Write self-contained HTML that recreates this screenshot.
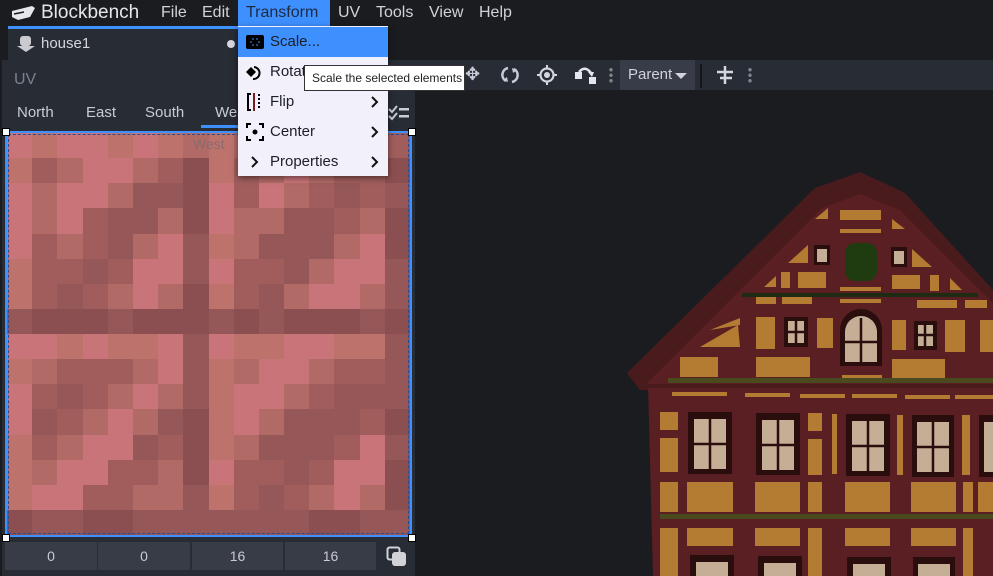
<!DOCTYPE html>
<html><head><meta charset="utf-8"><style>
*{margin:0;padding:0;box-sizing:border-box}
body{width:993px;height:576px;overflow:hidden;background:#1b1c20;font-family:"Liberation Sans","DejaVu Sans",sans-serif;position:relative;color:#d4d6dc}
.abs{position:absolute}
.menu span{position:absolute;top:4px;font-size:16px;color:#d0d3da}
#tex{position:absolute;left:7px;top:133px;width:403px;height:402px;display:grid;grid-template-columns:repeat(16,1fr);grid-template-rows:repeat(16,1fr)}
#tex i{display:block}
.P{background:#c97479}.R{background:#bd736b}.L{background:#b16a65}.M{background:#a05d5c}.N{background:#955757}.D{background:#8b4f51}
.mi{position:absolute;left:0;width:150px;height:30px;font-size:15px;color:#1d1f26}
.mi b{position:absolute;left:32px;top:6px;font-weight:normal}
.mi .ar{position:absolute;right:9px;top:9px}
.inp{position:absolute;top:542px;height:28px;background:#383c47;color:#c8cbd2;font-size:14px;text-align:center;line-height:28px}
.tb{position:absolute;top:104px;font-size:15px;color:#c8ccd4}
</style></head><body>
<div class="abs" style="left:0;top:0;width:993px;height:27px;background:#1b1c20"></div>
<svg class="abs" style="left:10px;top:5px" width="26" height="18" viewBox="0 0 26 18"><path d="M2 6 L22 1 L25 3 L20 12 L8 15 L2 12Z" fill="#e6e7ea"/><path d="M4 9 L14 7" stroke="#1b1c20" stroke-width="1.5"/></svg>
<div class="abs" style="left:41px;top:2px;font-size:19px;color:#e4e6ea">Blockbench</div>
<div class="menu">
<span style="left:161px">File</span><span style="left:202px">Edit</span>
</div>
<div class="abs" style="left:238px;top:0;width:92px;height:27px;background:#3e90ff"></div>
<div class="menu"><span style="left:246px;color:#1d2a44">Transform</span><span style="left:338px">UV</span><span style="left:376px">Tools</span><span style="left:429px">View</span><span style="left:479px">Help</span></div>
<div class="abs" style="left:0;top:27px;width:8px;height:33px;background:#1b1c20"></div>
<div class="abs" style="left:8px;top:26px;width:232px;height:3px;background:#3e90ff"></div>
<div class="abs" style="left:8px;top:29px;width:232px;height:31px;background:#282c34"></div>
<svg class="abs" style="left:16px;top:35px" width="20" height="18" viewBox="0 0 20 18"><rect x="4" y="1" width="11" height="10" rx="3" fill="#c9cbd1"/><path d="M1 11 H19 L10 17Z" fill="#c9cbd1"/></svg>
<div class="abs" style="left:41px;top:35px;font-size:15px;color:#d4d6dc">house1</div>
<div class="abs" style="left:227px;top:40px;width:8px;height:8px;border-radius:50%;background:#d4d6dc"></div>
<div class="abs" style="left:2px;top:60px;width:413px;height:516px;background:#282c34"></div>
<div class="abs" style="left:14px;top:71px;font-size:16px;color:#7c808a">UV</div>
<div class="tb" style="left:17px">North</div><div class="tb" style="left:86px">East</div><div class="tb" style="left:145px">South</div><div class="tb" style="left:215px">West</div>
<div class="abs" style="left:201px;top:125px;width:40px;height:3px;background:#3e90ff"></div>
<svg class="abs" style="left:388px;top:104px" width="22" height="18" viewBox="0 0 22 18"><path d="M1 5 L4 8 L9 2 M1 12 L4 15 L9 9" stroke="#c8ccd4" stroke-width="2" fill="none"/><rect x="11" y="4" width="10" height="2.5" fill="#c8ccd4"/><rect x="11" y="11" width="10" height="2.5" fill="#c8ccd4"/></svg>
<div class="abs" style="left:5px;top:131px;width:407px;height:406px;border:2px solid #3e90ff"></div>
<div id="tex">
<i class=P></i><i class=R></i><i class=P></i><i class=P></i><i class=R></i><i class=P></i><i class=R></i><i class=L></i><i class=R></i><i class=L></i><i class=P></i><i class=L></i><i class=M></i><i class=L></i><i class=L></i><i class=M></i>
<i class=R></i><i class=M></i><i class=L></i><i class=P></i><i class=P></i><i class=L></i><i class=M></i><i class=D></i><i class=R></i><i class=M></i><i class=L></i><i class=P></i><i class=L></i><i class=M></i><i class=M></i><i class=D></i>
<i class=P></i><i class=L></i><i class=P></i><i class=P></i><i class=L></i><i class=N></i><i class=N></i><i class=D></i><i class=P></i><i class=M></i><i class=P></i><i class=L></i><i class=M></i><i class=N></i><i class=M></i><i class=N></i>
<i class=P></i><i class=L></i><i class=P></i><i class=M></i><i class=N></i><i class=N></i><i class=L></i><i class=D></i><i class=P></i><i class=L></i><i class=L></i><i class=N></i><i class=N></i><i class=M></i><i class=L></i><i class=D></i>
<i class=P></i><i class=M></i><i class=L></i><i class=M></i><i class=N></i><i class=L></i><i class=P></i><i class=N></i><i class=R></i><i class=L></i><i class=N></i><i class=N></i><i class=N></i><i class=L></i><i class=P></i><i class=D></i>
<i class=R></i><i class=M></i><i class=M></i><i class=N></i><i class=M></i><i class=P></i><i class=P></i><i class=N></i><i class=P></i><i class=M></i><i class=M></i><i class=N></i><i class=L></i><i class=P></i><i class=P></i><i class=N></i>
<i class=R></i><i class=M></i><i class=N></i><i class=M></i><i class=L></i><i class=P></i><i class=L></i><i class=D></i><i class=R></i><i class=M></i><i class=N></i><i class=L></i><i class=P></i><i class=P></i><i class=L></i><i class=N></i>
<i class=N></i><i class=D></i><i class=D></i><i class=D></i><i class=N></i><i class=D></i><i class=D></i><i class=D></i><i class=N></i><i class=D></i><i class=N></i><i class=D></i><i class=D></i><i class=D></i><i class=N></i><i class=D></i>
<i class=P></i><i class=P></i><i class=R></i><i class=P></i><i class=R></i><i class=R></i><i class=P></i><i class=N></i><i class=P></i><i class=R></i><i class=R></i><i class=P></i><i class=P></i><i class=R></i><i class=R></i><i class=N></i>
<i class=R></i><i class=L></i><i class=M></i><i class=M></i><i class=M></i><i class=L></i><i class=P></i><i class=N></i><i class=R></i><i class=L></i><i class=P></i><i class=P></i><i class=L></i><i class=M></i><i class=M></i><i class=N></i>
<i class=P></i><i class=M></i><i class=N></i><i class=M></i><i class=L></i><i class=P></i><i class=L></i><i class=N></i><i class=R></i><i class=P></i><i class=P></i><i class=L></i><i class=M></i><i class=N></i><i class=N></i><i class=N></i>
<i class=P></i><i class=N></i><i class=M></i><i class=L></i><i class=P></i><i class=L></i><i class=N></i><i class=D></i><i class=R></i><i class=P></i><i class=L></i><i class=N></i><i class=N></i><i class=N></i><i class=M></i><i class=D></i>
<i class=R></i><i class=M></i><i class=L></i><i class=P></i><i class=P></i><i class=N></i><i class=M></i><i class=D></i><i class=R></i><i class=L></i><i class=N></i><i class=N></i><i class=N></i><i class=M></i><i class=P></i><i class=N></i>
<i class=R></i><i class=L></i><i class=P></i><i class=P></i><i class=M></i><i class=M></i><i class=L></i><i class=D></i><i class=P></i><i class=M></i><i class=M></i><i class=N></i><i class=M></i><i class=P></i><i class=P></i><i class=D></i>
<i class=R></i><i class=P></i><i class=P></i><i class=M></i><i class=M></i><i class=L></i><i class=L></i><i class=N></i><i class=R></i><i class=M></i><i class=N></i><i class=M></i><i class=L></i><i class=P></i><i class=L></i><i class=D></i>
<i class=D></i><i class=N></i><i class=N></i><i class=D></i><i class=D></i><i class=N></i><i class=N></i><i class=N></i><i class=N></i><i class=N></i><i class=N></i><i class=N></i><i class=D></i><i class=D></i><i class=N></i><i class=N></i>
</div>
<div class="abs" style="left:8px;top:134px;width:401px;height:400px;border:1px dashed #2f4c8a"></div>
<div class="abs" style="left:193px;top:136px;font-size:14px;color:#8a6a6e">West</div>
<div class="abs" style="left:2px;top:128px;width:8px;height:8px;background:#fff;border:1px solid #000"></div>
<div class="abs" style="left:408px;top:128px;width:8px;height:8px;background:#fff;border:1px solid #000"></div>
<div class="abs" style="left:2px;top:534px;width:8px;height:8px;background:#fff;border:1px solid #000"></div>
<div class="abs" style="left:408px;top:534px;width:8px;height:8px;background:#fff;border:1px solid #000"></div>
<div class="inp" style="left:5px;width:92px">0</div>
<div class="inp" style="left:98px;width:92px">0</div>
<div class="inp" style="left:192px;width:91px">16</div>
<div class="inp" style="left:285px;width:91px">16</div>
<svg class="abs" style="left:386px;top:546px" width="21" height="21" viewBox="0 0 21 21"><rect x="1.5" y="1.5" width="12" height="12" rx="2" fill="none" stroke="#d0d2d8" stroke-width="2"/><rect x="6" y="6" width="14" height="14" rx="3" fill="#d0d2d8"/></svg>
<div class="abs" style="left:415px;top:60px;width:578px;height:30px;background:#282c35"></div>
<div class="abs" style="left:465px;top:64px;font-size:18px;color:#c8ccd8">✥</div>
<svg class="abs" style="left:500px;top:65px" width="20" height="20" viewBox="0 0 20 20"><path d="M8 3 A7 7 0 0 0 6 16 M12 17 A7 7 0 0 0 14 4" stroke="#c8ccd8" stroke-width="2.5" fill="none"/><path d="M3 15 L8 17 L7 12Z M17 5 L12 3 L13 8Z" fill="#c8ccd8"/></svg>
<svg class="abs" style="left:537px;top:65px" width="20" height="20" viewBox="0 0 20 20"><circle cx="10" cy="10" r="6.5" stroke="#d4d6de" stroke-width="2.2" fill="none"/><circle cx="10" cy="10" r="3" fill="#d4d6de"/><path d="M10 0v3M10 17v3M0 10h3M17 10h3" stroke="#d4d6de" stroke-width="2"/></svg>
<svg class="abs" style="left:574px;top:65px" width="24" height="20" viewBox="0 0 24 20"><rect x="1" y="7" width="7" height="7" fill="#e4e6ec"/><rect x="15" y="12" width="7" height="7" fill="#e4e6ec"/><path d="M5 7 Q11 0 17 8" stroke="#e4e6ec" stroke-width="2.5" fill="none"/><path d="M14 7 L20 7 L18 12Z" fill="#e4e6ec"/></svg>
<div class="abs" style="left:609px;top:67px;width:4px;height:16px;background:radial-gradient(circle,#80848e 1.5px,transparent 2px) 0 0/4px 5.5px"></div>
<div class="abs" style="left:620px;top:60px;width:75px;height:30px;background:#383c48"></div>
<div class="abs" style="left:628px;top:66px;font-size:15px;color:#d0d3da">Parent</div>
<div class="abs" style="left:675px;top:73px;width:0;height:0;border-left:6px solid transparent;border-right:6px solid transparent;border-top:6px solid #d0d3da"></div>
<div class="abs" style="left:700px;top:64px;width:2px;height:24px;background:#15161a"></div>
<svg class="abs" style="left:716px;top:65px" width="20" height="20" viewBox="0 0 20 20"><path d="M1 7h16M4 13h12M9 1v18" stroke="#d4d6de" stroke-width="2.5"/></svg>
<div class="abs" style="left:748px;top:67px;width:4px;height:16px;background:radial-gradient(circle,#80848e 1.5px,transparent 2px) 0 0/4px 5.5px"></div>
<svg class="abs" style="left:0;top:0" width="993" height="576" viewBox="0 0 993 576">
<polygon points="627,373 815,188 860,172 905,193 993,290 993,576 653,576 653,390 640,390" fill="#4a1b1d"/>
<polygon points="648,382 822,208 860,194 900,210 993,303 993,576 653,576" fill="#5a1f22"/>
<g fill="#b47b33">
<rect x="840" y="210" width="41" height="10"/><rect x="840" y="229" width="41" height="4"/>
<polygon points="815,219 828,208 828,219"/><polygon points="892,219 905,229 892,229"/>
<polygon points="788,263 808,245 808,263"/><polygon points="912,249 932,267 912,267"/>
<rect x="781" y="272" width="9" height="16"/><rect x="798" y="272" width="28" height="16"/><rect x="892" y="275" width="28" height="14"/><rect x="930" y="275" width="9" height="16"/>
<polygon points="764,287 776,276 776,287"/><polygon points="950,278 962,290 950,290"/>
<rect x="840" y="287" width="41" height="4"/>
<rect x="756" y="296" width="20" height="8"/><rect x="782" y="296" width="30" height="8"/><rect x="840" y="299" width="41" height="4"/><rect x="917" y="300" width="40" height="8"/><rect x="965" y="300" width="22" height="8"/>
<rect x="756" y="317" width="19" height="32"/><rect x="817" y="318" width="16" height="30"/><rect x="892" y="320" width="14" height="30"/><rect x="945" y="320" width="20" height="32"/><rect x="980" y="320" width="13" height="32"/>
<polygon points="700,347 738,325 740,347"/><polygon points="710,330 740,318 740,325"/>
<rect x="756" y="357" width="54" height="20"/><rect x="892" y="359" width="53" height="20"/><rect x="680" y="357" width="38" height="20"/><rect x="842" y="375" width="40" height="6"/>
<rect x="672" y="392" width="55" height="4"/><rect x="745" y="393" width="45" height="4"/><rect x="800" y="394" width="45" height="4"/><rect x="852" y="394" width="45" height="4"/><rect x="905" y="395" width="45" height="4"/><rect x="955" y="395" width="38" height="4"/>
<rect x="660" y="412" width="18" height="18"/><rect x="660" y="438" width="18" height="34"/><rect x="808" y="413" width="14" height="18"/><rect x="808" y="439" width="14" height="36"/><rect x="832" y="414" width="5" height="60"/><rect x="897" y="415" width="6" height="60"/><rect x="962" y="415" width="8" height="60"/>
<rect x="660" y="482" width="18" height="30"/><rect x="687" y="482" width="46" height="30"/><rect x="755" y="482" width="45" height="30"/><rect x="808" y="482" width="14" height="30"/><rect x="845" y="482" width="45" height="30"/><rect x="911" y="482" width="45" height="30"/><rect x="963" y="482" width="10" height="30"/><rect x="978" y="482" width="15" height="30"/>
<rect x="660" y="528" width="18" height="48"/><rect x="687" y="528" width="46" height="18"/><rect x="755" y="528" width="45" height="18"/><rect x="808" y="528" width="14" height="48"/><rect x="845" y="528" width="45" height="18"/><rect x="911" y="528" width="45" height="18"/><rect x="963" y="528" width="10" height="48"/>
</g>
<rect x="742" y="293" width="236" height="4" fill="#1f2a12"/>
<rect x="845" y="243" width="32" height="38" rx="10" fill="#1f3c10"/>
<g fill="#2a0e0e"><rect x="814" y="245" width="16" height="20"/><rect x="891" y="247" width="16" height="20"/><rect x="784" y="317" width="24" height="30"/><rect x="914" y="321" width="23" height="29"/><path d="M840 366 V330 A20 20 0 0 1 882 330 V366Z"/>
<rect x="688" y="412" width="44" height="62"/><rect x="756" y="413" width="44" height="62"/><rect x="846" y="414" width="44" height="62"/><rect x="912" y="415" width="42" height="62"/><rect x="979" y="415" width="14" height="62"/>
<rect x="690" y="555" width="44" height="21"/><rect x="758" y="556" width="44" height="21"/><rect x="847" y="557" width="44" height="21"/><rect x="913" y="557" width="42" height="21"/></g>
<g fill="#c4ae96"><rect x="817" y="249" width="10" height="13"/><rect x="894" y="251" width="10" height="13"/><rect x="788" y="321" width="16" height="22"/><rect x="918" y="325" width="15" height="21"/><path d="M845 362 V332 A16 16 0 0 1 877 332 V362Z"/>
<rect x="694" y="419" width="32" height="50"/><rect x="762" y="420" width="32" height="50"/><rect x="852" y="421" width="32" height="50"/><rect x="917" y="422" width="32" height="50"/><rect x="984" y="422" width="9" height="50"/>
<rect x="696" y="562" width="32" height="14"/><rect x="764" y="563" width="32" height="14"/><rect x="853" y="564" width="32" height="14"/><rect x="918" y="564" width="32" height="14"/></g>
<g stroke="#2a0e0e" stroke-width="2.5"><path d="M710 419v50M694 444h32M778 420v50M762 445h32M868 421v50M852 446h32M933 422v50M917 447h32M796 321v22M788 332h16M925 325v21M918 335h15M861 318v44M845 342h32"/></g>
<rect x="668" y="378" width="325" height="5" fill="#4b4a1f"/><rect x="640" y="384" width="353" height="4" fill="#4a1b1d"/>
<rect x="660" y="514" width="333" height="5" fill="#4b4a1f"/>
</svg>
<div class="abs" style="left:238px;top:26px;width:150px;height:150px;background:#f2f0fa;box-shadow:0 2px 6px rgba(0,0,0,.5)">
<div class="mi" style="top:1px;background:#3e90ff"><svg class="abs" style="left:8px;top:8px" width="18" height="14"><rect width="18" height="14" rx="2" fill="#000"/><path d="M6 4h2M10 4h2M6 10h2M10 10h2M5 6v2M13 6v2" stroke="#3e90ff" stroke-width="1"/></svg><b>Scale...</b></div>
<div class="mi" style="top:31px"><svg class="abs" style="left:7px;top:7px" width="20" height="18" viewBox="0 0 20 18"><path d="M1 8 L6 3 L11 8 L6 13Z" fill="#000"/><path d="M9 3 A6 6 0 1 1 8 15" stroke="#000" stroke-width="2" fill="none"/></svg><b>Rotate</b></div>
<div class="mi" style="top:61px"><svg class="abs" style="left:8px;top:5px" width="18" height="20"><path d="M5 2H2V18H5" stroke="#000" stroke-width="2" fill="none"/><rect x="7" y="1" width="2" height="18" fill="#7a1b20"/><path d="M13 2v16" stroke="#000" stroke-width="2" stroke-dasharray="2 2"/></svg><b>Flip</b><svg class="ar" width="8" height="12"><path d="M1 1L6 6L1 11" stroke="#111" stroke-width="2" fill="none"/></svg></div>
<div class="mi" style="top:91px"><svg class="abs" style="left:8px;top:6px" width="18" height="18"><path d="M1 5V1H5M13 1H17V5M17 13V17H13M5 17H1V13" stroke="#000" stroke-width="2" fill="none"/><circle cx="9" cy="9" r="2.5" fill="#000"/></svg><b>Center</b><svg class="ar" width="8" height="12"><path d="M1 1L6 6L1 11" stroke="#111" stroke-width="2" fill="none"/></svg></div>
<div class="mi" style="top:121px"><svg class="abs" style="left:13px;top:9px" width="8" height="12"><path d="M1 1L6 6L1 11" stroke="#111" stroke-width="2" fill="none"/></svg><b>Properties</b><svg class="ar" width="8" height="12"><path d="M1 1L6 6L1 11" stroke="#111" stroke-width="2" fill="none"/></svg></div>
</div>
<div class="abs" style="left:304px;top:65px;width:161px;height:26px;background:#fff;border:1px solid #333;font-size:12px;color:#222;line-height:24px;padding-left:7px;white-space:nowrap">Scale the selected elements</div>
</body></html>
